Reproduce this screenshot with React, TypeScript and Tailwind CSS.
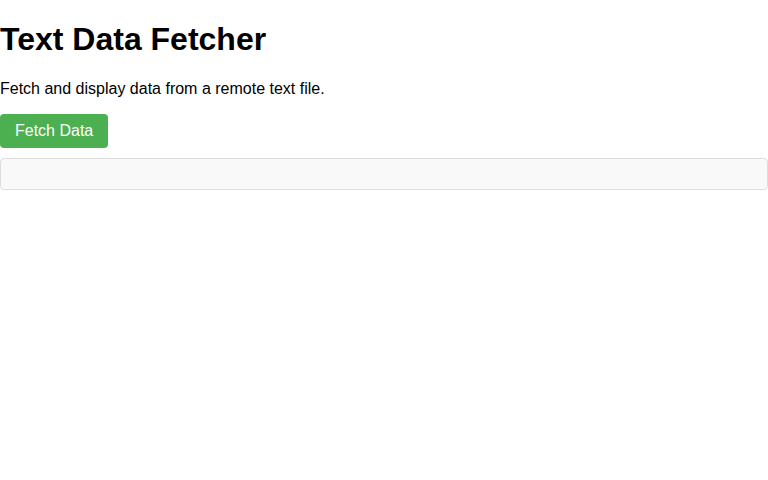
export default function App() {
  return (
    <div className="bg-white min-h-[480px] text-black flow-root" style={{ fontFamily: '"Liberation Sans", Arial, sans-serif' }}>
      <h1 className="text-[32px] font-bold leading-[normal] my-[21.44px]">Text Data Fetcher</h1>
      <p className="text-[16px] leading-[normal] my-[16px]">Fetch and display data from a remote text file.</p>
      <button className="block w-fit bg-[#4CAF50] text-white text-[16px] leading-[normal] px-[15px] py-[8px] rounded-[4px] cursor-pointer">
        Fetch Data
      </button>
      <div className="border border-[#ddd] bg-[#f9f9f9] rounded-[4px] p-[15px] mt-[10px]"></div>
    </div>
  );
}
